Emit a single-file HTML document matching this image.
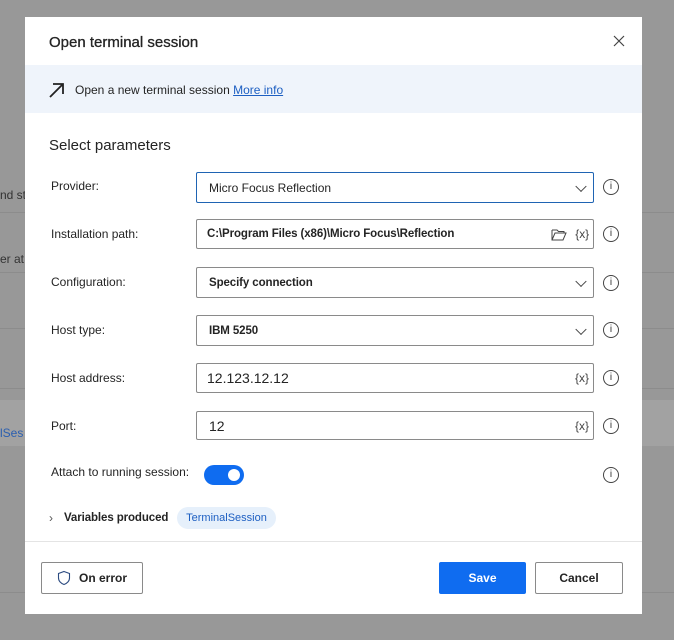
<!DOCTYPE html><html><head><style>
*{box-sizing:border-box;margin:0;padding:0}
body{width:674px;height:640px;background:#989898;font-family:"Liberation Sans",sans-serif;position:relative;overflow:hidden;color:#242424}
.bgl{position:absolute;left:0;width:674px;height:1px;background:#8c8c8c}
.dlg{position:absolute;left:25px;top:17px;width:617px;height:597px;background:#fff}
.a{position:absolute}
.lbl{position:absolute;left:26px;font-size:12px;color:#242424}
.fld{position:absolute;left:171px;width:398px;border:1px solid #8a8a8a;border-radius:2px;font-size:12px;padding-left:12px;display:flex;align-items:center}
.info{position:absolute;left:578px;width:16px;height:16px;border:1px solid #444;border-radius:50%;font-size:10px;text-align:center;line-height:14px;font-family:"Liberation Sans",sans-serif;color:#333}
.chev{position:absolute;right:8px;top:50%;width:8px;height:8px;border-right:1.1px solid #444;border-bottom:1.1px solid #444;transform:translateY(-70%) rotate(45deg)}
.x{position:absolute;right:4px;font-size:12px;color:#444}
.btn{position:absolute;top:545px;height:32px;border:1px solid #8a8a8a;border-radius:2px;font-size:12px;font-weight:bold;display:flex;align-items:center;justify-content:center}
.sb{font-weight:bold;font-size:11.5px;letter-spacing:-0.1px}
</style></head><body>
<div class="bgl" style="top:212px"></div><div class="bgl" style="top:272px"></div><div class="bgl" style="top:328px"></div><div class="bgl" style="top:388px"></div>
<div class="a" style="left:0;top:400px;width:674px;height:46px;background:#a2a2a2"></div>
<div class="bgl" style="top:592px"></div>
<div class="a" style="left:0;top:188px;font-size:12px;color:#333">nd st</div>
<div class="a" style="left:0;top:252px;font-size:12px;color:#333">er at</div>
<div class="a" style="left:0;top:426px;font-size:12px;color:#2b5fb0">lSes</div>
<div class="dlg">
<div class="a" style="left:24px;top:17px;font-size:15px;color:#242424;-webkit-text-stroke:0.3px #242424">Open terminal session</div>
<svg class="a" style="left:588px;top:18px" width="12" height="12"><path d="M1 1L11 11M11 1L1 11" stroke="#444" stroke-width="1.2"/></svg>
<div class="a" style="left:0;top:48px;width:617px;height:48px;background:#eff4fb"></div>
<svg class="a" style="left:23px;top:64px" width="18" height="18"><path d="M2 16L15 3M5 3H15V13" stroke="#222" stroke-width="1.8" fill="none"/></svg>
<div class="a" style="left:50px;top:66px;font-size:12px">Open a new terminal session <span style="color:#1d5fc2;text-decoration:underline">More info</span></div>
<div class="a" style="left:24px;top:120px;font-size:15px">Select parameters</div>

<div class="lbl" style="top:162px">Provider:</div>
<div class="fld" style="top:155px;height:31px;border-color:#1f64b3">Micro Focus Reflection<span class="chev"></span></div>
<div class="info" style="top:162px">i</div>

<div class="lbl" style="top:210px">Installation path:</div>
<div class="fld sb" style="top:202px;height:30px;padding-left:10px">C:\Program Files (x86)\Micro Focus\Reflection<svg class="a" style="right:26px;top:8px" width="16" height="13"><path d="M1 2H6L7.5 3.5H13V5M1 2V12H12L15 5H4L1 12" stroke="#444" stroke-width="1" fill="none"/></svg><span class="x" style="font-weight:normal">{x}</span></div>
<div class="info" style="top:209px">i</div>

<div class="lbl" style="top:258px">Configuration:</div>
<div class="fld sb" style="top:250px;height:31px">Specify connection<span class="chev"></span></div>
<div class="info" style="top:258px">i</div>

<div class="lbl" style="top:306px">Host type:</div>
<div class="fld sb" style="top:298px;height:31px">IBM 5250<span class="chev"></span></div>
<div class="info" style="top:305px">i</div>

<div class="lbl" style="top:354px">Host address:</div>
<div class="fld" style="top:346px;height:30px;font-size:14px;padding-left:10px">12.123.12.12<span class="x">{x}</span></div>
<div class="info" style="top:353px">i</div>

<div class="lbl" style="top:402px">Port:</div>
<div class="fld" style="top:394px;height:29px;font-size:14px">12<span class="x">{x}</span></div>
<div class="info" style="top:401px">i</div>

<div class="lbl" style="top:448px">Attach to running session:</div>
<div class="a" style="left:179px;top:448px;width:40px;height:20px;border-radius:10px;background:#0f6cf0"><div class="a" style="left:24px;top:4px;width:12px;height:12px;border-radius:50%;background:#fff"></div></div>
<div class="info" style="top:450px">i</div>

<div class="a" style="left:24px;top:494px;font-size:12px;color:#555">›</div>
<div class="a sb" style="left:39px;top:495px">Variables produced</div>
<div class="a" style="left:152px;top:490px;width:99px;height:22px;border-radius:11px;background:#e6f0fb;color:#1d5fc2;font-size:11px;text-align:center;line-height:22px">TerminalSession</div>

<div class="a" style="left:0;top:524px;width:617px;height:1px;background:#e4e4e4"></div>
<div class="btn" style="left:16px;width:102px"><svg width="14" height="16" style="margin-right:8px"><path d="M7 1.5L12.5 3.5V8C12.5 11 10 13.5 7 14.5C4 13.5 1.5 11 1.5 8V3.5Z" stroke="#2b4a80" stroke-width="1.1" fill="none"/></svg>On error</div>
<div class="btn" style="left:414px;width:87px;background:#0f6cf0;border-color:#0f6cf0;color:#fff">Save</div>
<div class="btn" style="left:510px;width:88px">Cancel</div>
</div>
</body></html>
